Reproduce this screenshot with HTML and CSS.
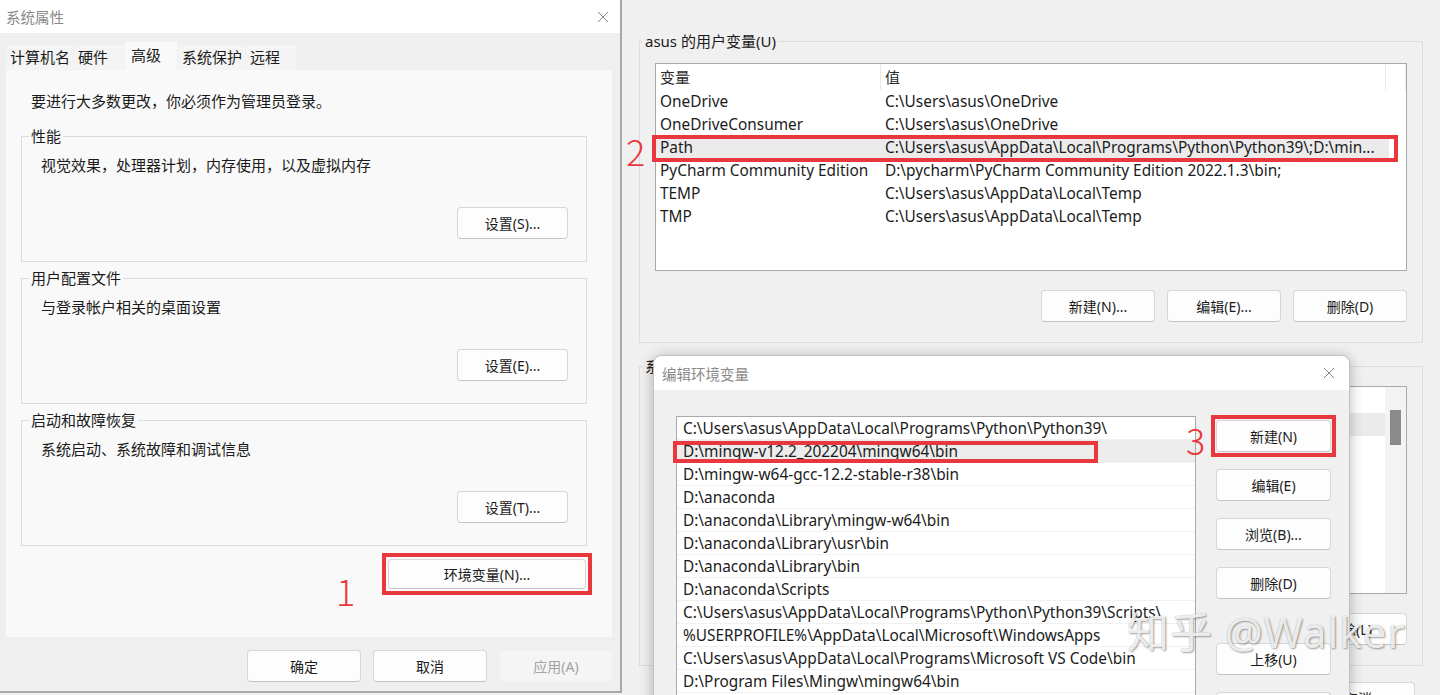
FILE: index.html
```html
<!DOCTYPE html>
<html lang="zh-CN">
<head>
    <meta charset="UTF-8">
    <title>系统属性 - 环境变量</title>
    <link rel="stylesheet" href="styles.css">
</head>
<body>
<div class="desk">
    <!-- 系统属性 -->
    <section class="sys">
        <header class="titlebar">
            <span class="title">系统属性</span>
            <svg class="close" viewBox="0 0 12 12"><path d="M1 1L11 11M11 1L1 11"/></svg>
        </header>
        <nav class="tabs">
            <span class="tab">计算机名</span>
            <span class="tab">硬件</span>
            <span class="tab active">高级</span>
            <span class="tab">系统保护</span>
            <span class="tab">远程</span>
        </nav>
        <div class="page">
            <p class="note">要进行大多数更改，你必须作为管理员登录。</p>
            <fieldset class="group">
                <legend>性能</legend>
                <div class="group-body">
                    <p>视觉效果，处理器计划，内存使用，以及虚拟内存</p>
                    <div class="group-actions"><button class="btn">设置(S)...</button></div>
                </div>
            </fieldset>
            <fieldset class="group">
                <legend>用户配置文件</legend>
                <div class="group-body">
                    <p>与登录帐户相关的桌面设置</p>
                    <div class="group-actions"><button class="btn">设置(E)...</button></div>
                </div>
            </fieldset>
            <fieldset class="group">
                <legend>启动和故障恢复</legend>
                <div class="group-body">
                    <p>系统启动、系统故障和调试信息</p>
                    <div class="group-actions"><button class="btn">设置(T)...</button></div>
                </div>
            </fieldset>
            <div class="env-row">
                <button class="btn btn-env marked">环境变量(N)...</button>
            </div>
        </div>
        <footer class="dialog-actions">
            <button class="btn">确定</button>
            <button class="btn">取消</button>
            <button class="btn" disabled>应用(A)</button>
        </footer>
        <span class="step step-1">1</span>
    </section>

    <!-- 环境变量 -->
    <section class="envwin">
        <fieldset class="group">
            <legend>asus 的用户变量(U)</legend>
            <div class="group-body">
                <div class="listview">
                    <div class="lv-head"><span class="c-name">变量</span><span class="c-val">值</span><span class="c-rest"></span></div>
                    <div class="lv-row"><span class="c-name">OneDrive</span><span class="c-val">C:\Users\asus\OneDrive</span></div>
                    <div class="lv-row"><span class="c-name">OneDriveConsumer</span><span class="c-val">C:\Users\asus\OneDrive</span></div>
                    <div class="lv-row selected"><span class="c-name">Path</span><span class="c-val">C:\Users\asus\AppData\Local\Programs\Python\Python39\;D:\min...</span></div>
                    <div class="lv-row"><span class="c-name">PyCharm Community Edition</span><span class="c-val">D:\pycharm\PyCharm Community Edition 2022.1.3\bin;</span></div>
                    <div class="lv-row"><span class="c-name">TEMP</span><span class="c-val">C:\Users\asus\AppData\Local\Temp</span></div>
                    <div class="lv-row"><span class="c-name">TMP</span><span class="c-val">C:\Users\asus\AppData\Local\Temp</span></div>
                    <span class="mark mark-path"></span>
                </div>
                <div class="lv-actions">
                    <button class="btn">新建(N)...</button>
                    <button class="btn">编辑(E)...</button>
                    <button class="btn">删除(D)</button>
                </div>
            </div>
        </fieldset>
        <fieldset class="group sys-vars">
            <legend>系统变量(S)</legend>
            <div class="group-body">
                <div class="listview">
                    <div class="lv-head"><span class="c-name">变量</span><span class="c-val">值</span></div>
                    <div class="lv-row selected"><span class="c-name">Path</span><span class="c-val">C:\Windows\system32;C:\Windows;</span></div>
                    <div class="lv-row"><span class="c-name">PATHEXT</span><span class="c-val">.COM;.EXE;.BAT;.CMD</span></div>
                    <div class="lv-row"><span class="c-name">PROCESSOR_ARCHITECTURE</span><span class="c-val">AMD64</span></div>
                    <div class="lv-scroll"><span class="thumb"></span></div>
                </div>
                <div class="lv-actions">
                    <button class="btn">新建(W)...</button>
                    <button class="btn">编辑(I)...</button>
                    <button class="btn">删除(L)</button>
                </div>
            </div>
        </fieldset>
        <div class="env-actions">
            <button class="btn">确定</button>
            <button class="btn">取消</button>
        </div>

        <!-- 编辑环境变量 -->
        <div class="editdlg">
            <header class="ed-title">
                <span>编辑环境变量</span>
                <svg class="close" viewBox="0 0 12 12"><path d="M1 1L11 11M11 1L1 11"/></svg>
            </header>
            <div class="ed-body">
                <div class="ed-list">
                    <div class="ed-row">C:\Users\asus\AppData\Local\Programs\Python\Python39\</div>
                    <div class="ed-row selected">D:\mingw-v12.2_202204\mingw64\bin</div>
                    <div class="ed-row">D:\mingw-w64-gcc-12.2-stable-r38\bin</div>
                    <div class="ed-row">D:\anaconda</div>
                    <div class="ed-row">D:\anaconda\Library\mingw-w64\bin</div>
                    <div class="ed-row">D:\anaconda\Library\usr\bin</div>
                    <div class="ed-row">D:\anaconda\Library\bin</div>
                    <div class="ed-row">D:\anaconda\Scripts</div>
                    <div class="ed-row">C:\Users\asus\AppData\Local\Programs\Python\Python39\Scripts\</div>
                    <div class="ed-row">%USERPROFILE%\AppData\Local\Microsoft\WindowsApps</div>
                    <div class="ed-row">C:\Users\asus\AppData\Local\Programs\Microsoft VS Code\bin</div>
                    <div class="ed-row">D:\Program Files\Mingw\mingw64\bin</div>
                    <div class="ed-row">D:\Program Files\Git\cmd</div>
                    <span class="mark mark-row"></span>
                </div>
                <div class="ed-buttons">
                    <button class="btn marked-thin">新建(N)</button>
                    <button class="btn">编辑(E)</button>
                    <button class="btn">浏览(B)...</button>
                    <button class="btn">删除(D)</button>
                    <button class="btn spaced">上移(U)</button>
                    <button class="btn">下移(O)</button>
                </div>
            </div>
        </div>

        <span class="step step-2">2</span>
        <span class="step step-3">3</span>
        <div class="watermark">知乎 @Walker</div>
    </section>
</div>
</body>
</html>
```

FILE: styles.css
```css
* {
    box-sizing: border-box;
}
html, body {
    margin: 0;
    height: 100%;
}
body {
    font-family: "Noto Sans", "Noto Sans CJK SC", sans-serif;
    font-size: 15px;
    color: #1b1b1b;
    background: #f0f0f0;
    overflow: hidden;
}
.desk {
    display: flex;
    width: 1440px;
    height: 695px;
}
p {
    margin: 0;
    line-height: 20px;
}

/* buttons */
.btn {
    position: relative;
    width: 111px;
    height: 32px;
    padding: 0;
    font-family: inherit;
    font-size: 14px;
    color: #1b1b1b;
    background: #fdfdfd;
    border: 1px solid #d6d6d6;
    border-bottom-color: #c4c4c4;
    border-radius: 4px;
}
.btn:disabled {
    color: #a3a3a3;
    background: #f5f5f5;
    border-color: #f2f2f2;
}
.close {
    width: 12px;
    height: 12px;
    fill: none;
    stroke: #858585;
    stroke-width: 1;
}

/* 系统属性 */
.sys {
    position: relative;
    flex-shrink: 0;
    width: 622px;
    height: 693px;
    background: #efefef;
    border-right: 2px solid #a8a8a8;
    border-bottom: 2px solid #a8a8a8;
}
.titlebar {
    height: 33px;
    background: #fff;
    display: flex;
    align-items: center;
    justify-content: space-between;
    padding: 0 11px 0 6px;
}
.title {
    color: #8a8a8a;
    font-size: 14.5px;
}
.tabs {
    height: 37px;
    display: flex;
    align-items: flex-end;
    padding-left: 6px;
}
.tab {
    height: 25px;
    line-height: 24px;
    min-width: 50px;
    padding: 0 3px 0 4px;
    margin-right: 1px;
    background: #f4f4f4;
}
.tab.active {
    height: 28px;
    line-height: 26px;
    min-width: 52px;
    padding-left: 6px;
    background: #f9f9f9;
}
.page {
    height: 567px;
    margin: 0 8px 0 6px;
    padding-top: 21px;
    background: #f9f9f9;
}
.note {
    margin: 0 0 15px 25px;
}
.group {
    margin: 0 25px 6px 15px;
    padding: 0;
    min-width: 0;
    border: 1px solid #dcdcdc;
}
.group legend {
    margin-left: 7px;
    padding: 0 2px;
    line-height: 20px;
}
.group-body {
    padding: 9px 18px 22px 19px;
}
.group-actions {
    display: flex;
    justify-content: flex-end;
    margin-top: 32px;
}
.env-row {
    display: flex;
    justify-content: flex-end;
    margin: 13px 26px 0 0;
}
.btn-env {
    width: 198px;
    height: 30px;
}
.marked::after,
.marked-thin::after {
    content: "";
    position: absolute;
    inset: -7px;
    border: 4px solid #e8383d;
}
.marked-thin::after {
    inset: -6px;
}
.dialog-actions {
    display: flex;
    justify-content: flex-end;
    gap: 12px;
    padding: 13px 7px 0 0;
}
.dialog-actions .btn {
    width: 114px;
}

/* annotations */
.step {
    position: absolute;
    color: #e8383d;
    font-family: "Noto Sans CJK SC", sans-serif;
    font-weight: 300;
    font-size: 36px;
    line-height: 36px;
}
.step-1 {
    left: 336px;
    top: 572px;
}
.step-2 {
    left: 4px;
    top: 132px;
}
.step-3 {
    left: 564px;
    top: 421px;
}
.mark {
    position: absolute;
    border: 4px solid #e8383d;
}

/* 环境变量 */
.envwin {
    position: relative;
    flex: 1;
    overflow: hidden;
    padding: 31px 17px 0;
    background: #f0f0f0;
}
.envwin .group {
    margin: 0 0 13px;
}
.envwin .group legend {
    margin-left: 3px;
}
.envwin .group-body {
    padding: 12px 15px 20px;
}
.envwin .sys-vars .group-body {
    padding-top: 10px;
}
.listview {
    position: relative;
    height: 208px;
    background: #fff;
    border: 1px solid #a9a9a9;
}
.lv-head,
.lv-row {
    display: flex;
    white-space: nowrap;
}
.lv-head {
    height: 26px;
    line-height: 26px;
    color: #2b2b2b;
}
.lv-head span {
    border-right: 1px solid #ebebeb;
}
.lv-row {
    height: 23px;
    line-height: 23px;
    font-size: 15.4px;
}
.c-name {
    width: 225px;
    padding-left: 4px;
    overflow: hidden;
}
.c-val {
    width: 505px;
    padding-left: 4px;
    overflow: hidden;
}
.c-rest {
    flex: 1;
}
.lv-row.selected {
    background: #ebebeb;
    width: 733px;
}
.mark-path {
    left: -4px;
    top: 71px;
    width: 746px;
    height: 27px;
}
.lv-scroll {
    position: absolute;
    top: 0;
    right: 0;
    bottom: 0;
    width: 21px;
    background: #f3f3f3;
}
.thumb {
    position: absolute;
    left: 5px;
    top: 23px;
    width: 11px;
    height: 35px;
    background: #8a8a8a;
}
.lv-actions {
    display: flex;
    justify-content: flex-end;
    gap: 12px;
    margin-top: 19px;
}
.lv-actions .btn {
    width: 114px;
    height: 32px;
}
.env-actions {
    display: flex;
    justify-content: flex-end;
    gap: 12px;
    margin: 16px 8px 0 0;
}
.env-actions .btn {
    width: 114px;
}

/* 编辑环境变量 */
.editdlg {
    position: absolute;
    left: 31px;
    top: 355px;
    width: 697px;
    height: 360px;
    background: #f0f0f0;
    border: 1px solid #c2c2c2;
    border-radius: 8px 8px 0 0;
    box-shadow: 0 2px 14px rgba(0, 0, 0, 0.28);
}
.ed-title {
    height: 34px;
    display: flex;
    align-items: center;
    justify-content: space-between;
    padding: 0 14px 0 8px;
    background: #fff;
    border-radius: 8px 8px 0 0;
    color: #8a8a8a;
    font-size: 14.5px;
}
.ed-body {
    display: flex;
    gap: 20px;
    padding: 26px 0 0 22px;
}
.ed-list {
    position: relative;
    width: 520px;
    height: 320px;
    background: #fff;
    border: 1px solid #a9a9a9;
}
.ed-row {
    height: 23px;
    line-height: 24px;
    padding-left: 6px;
    font-size: 15.4px;
    white-space: nowrap;
    overflow: hidden;
    border-bottom: 1px solid #f1f1f1;
}
.ed-row.selected {
    background: #ececec;
}
.mark-row {
    left: -4px;
    top: 24px;
    width: 425px;
    height: 22px;
}
.ed-buttons {
    display: flex;
    flex-direction: column;
    gap: 17px;
    padding-top: 4px;
}
.ed-buttons .btn {
    width: 115px;
    height: 32px;
}
.ed-buttons .spaced {
    margin-top: 27px;
}
.watermark {
    position: absolute;
    left: 505px;
    top: 604px;
    font-family: "Noto Sans", "Noto Sans CJK SC", sans-serif;
    font-size: 42px;
    line-height: 56px;
    color: rgba(255, 255, 255, 0.85);
    letter-spacing: 1px;
    text-shadow: 1px 1px 2px rgba(0, 0, 0, 0.35), 0 0 1px rgba(0, 0, 0, 0.3);
    white-space: nowrap;
}
```
